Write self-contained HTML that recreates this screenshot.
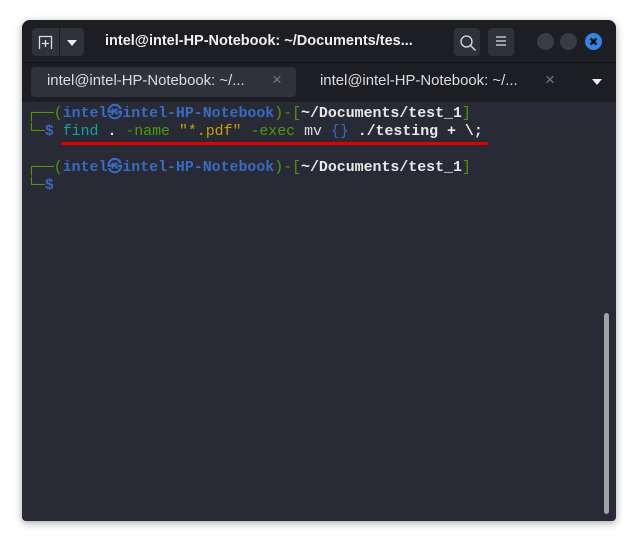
<html><head><style>
body{margin:0;width:638px;height:545px;background:#fff;position:relative;overflow:hidden;font-family:"Liberation Sans",sans-serif}
.win{position:absolute;left:22px;top:20px;width:594px;height:501px;background:#282a36;border-radius:8px 8px 4px 4px;box-shadow:0 2px 8px rgba(0,0,0,.35);overflow:hidden}
.title{position:absolute;left:0;top:0;width:594px;height:42px;background:#1d1e23;border-bottom:1px solid #111}
.tabs{position:absolute;left:0;top:43px;width:594px;height:39px;background:#1d1e23}
.btn{position:absolute;background:#30323a;border-radius:4px}
.term{position:absolute;left:0;top:82px;width:594px;height:419px;font-family:"Liberation Mono",monospace;font-size:14.9px;line-height:18px}
.l{position:absolute;left:5px;white-space:pre}
.g{color:#4e9a06}.b{color:#3b6ac0;font-weight:bold}.w{color:#e8e8e8;font-weight:bold}
.x{position:absolute;top:7px;color:#777;font-size:17px;width:14px;text-align:center}
</style></head><body>
<div class="win">
<div class="title">
 <div class="btn" style="left:10px;top:8px;width:52px;height:28px"></div>
 <div style="position:absolute;left:37px;top:8px;width:1px;height:28px;background:#1d1e23"></div>
 <svg style="position:absolute;left:16px;top:14px" width="16" height="16"><path d="M1.5 15V2.5h12V15" stroke="#ddd" fill="none" stroke-width="1.3"/><path d="M7.5 6v7M4 9.5h7" stroke="#ddd" stroke-width="1.3"/></svg>
 <svg style="position:absolute;left:44px;top:19px" width="12" height="8"><path d="M1 1h10L6 7z" fill="#eee"/></svg>
 <div style="position:absolute;left:83px;top:13px;color:#eee;font-weight:bold;font-size:14.5px">intel@intel-HP-Notebook: ~/Documents/tes...</div>
 <div class="btn" style="left:432px;top:8px;width:26px;height:28px"></div>
 <svg style="position:absolute;left:437px;top:14px" width="18" height="18"><circle cx="7.5" cy="7.5" r="5.5" stroke="#ddd" fill="none" stroke-width="1.3"/><path d="M11.5 11.5l5 5" stroke="#ddd" stroke-width="1.3"/></svg>
 <div class="btn" style="left:466px;top:8px;width:26px;height:28px"></div>
 <svg style="position:absolute;left:472px;top:14px" width="14" height="14"><path d="M2 3h10M2 7h10M2 11h10" stroke="#ddd" stroke-width="1.2"/></svg>
 <div style="position:absolute;left:515px;top:13px;width:17px;height:17px;border-radius:50%;background:#3a3c44"></div>
 <div style="position:absolute;left:538px;top:13px;width:17px;height:17px;border-radius:50%;background:#3a3c44"></div>
 <div style="position:absolute;left:563px;top:13px;width:17px;height:17px;border-radius:50%;background:#3584e4"></div>
 <svg style="position:absolute;left:563px;top:13px" width="17" height="17"><path d="M5.5 5.5l6 6M11.5 5.5l-6 6" stroke="#111" stroke-width="2.4"/></svg>
</div>
<div class="tabs">
 <div style="position:absolute;left:9px;top:4px;width:265px;height:30px;background:#30323a;border-radius:4px"></div>
 <div style="position:absolute;left:25px;top:10px;color:#ddd;font-size:14.9px">intel@intel-HP-Notebook: ~/...</div>
 <div class="x" style="left:248px">×</div>
 <div style="position:absolute;left:298px;top:10px;color:#ddd;font-size:14.9px">intel@intel-HP-Notebook: ~/...</div>
 <div class="x" style="left:521px">×</div>
 <svg style="position:absolute;left:569px;top:15px" width="12" height="8"><path d="M1 1h10L6 7z" fill="#eee"/></svg>
</div>
<div class="term">
 <div class="l" style="top:3px"><span class="g">┌──(</span><span class="b">intel㉿intel-HP-Notebook</span><span class="g">)-[</span><span class="w">~/Documents/test_1</span><span class="g">]</span></div>
 <div class="l" style="top:21px"><span class="g">└─</span><span class="b">$</span> <span style="color:#12a3a3">find</span> <span class="w">.</span> <span class="g">-name</span> <span style="color:#c4a000">"*.pdf"</span> <span class="g">-exec</span> <span style="color:#ddd">mv</span> <span style="color:#3b6ac0">{}</span> <span class="w">./testing + \;</span></div>
 <div style="position:absolute;left:39px;top:40px;width:427px;height:3px;background:#e00000;border-radius:2px"></div>
 <div class="l" style="top:57px"><span class="g">┌──(</span><span class="b">intel㉿intel-HP-Notebook</span><span class="g">)-[</span><span class="w">~/Documents/test_1</span><span class="g">]</span></div>
 <div class="l" style="top:75px"><span class="g">└─</span><span class="b">$</span></div>
 <div style="position:absolute;left:582px;top:211px;width:5px;height:201px;background:#a0a1a5;border-radius:3px"></div>
</div>
</div>
</body></html>
